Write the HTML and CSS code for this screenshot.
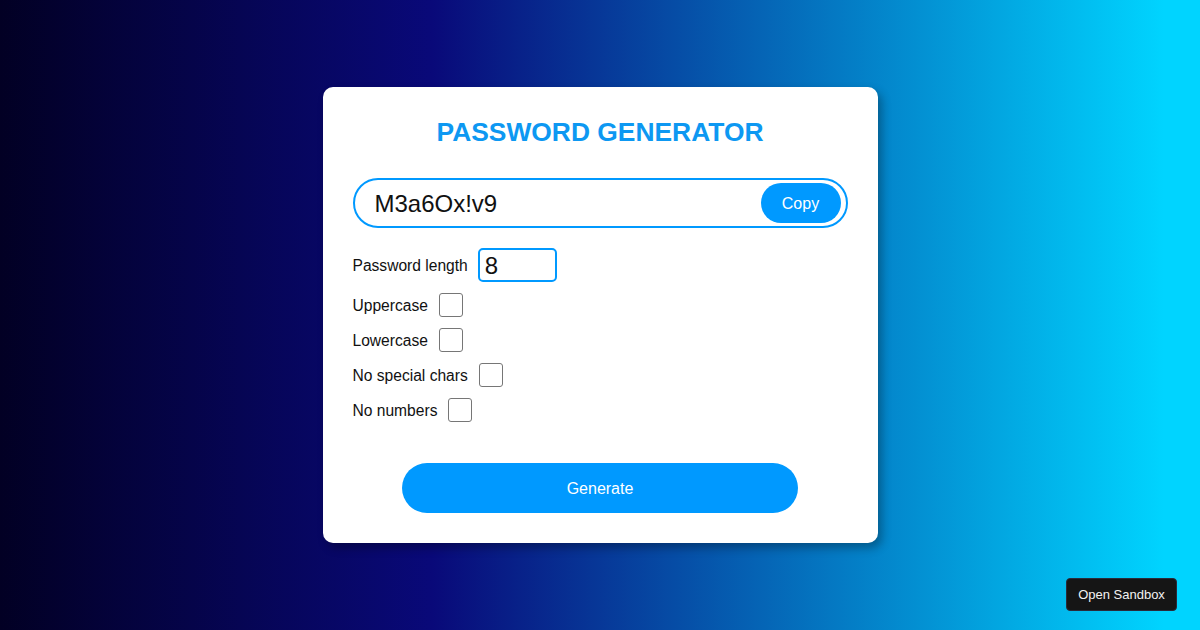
FILE: index.html
```html
<!DOCTYPE html>
<html lang="en">
<head>
<meta charset="utf-8">
<title>Password Generator</title>
<link rel="stylesheet" href="styles.css">
</head>
<body>
<main class="card">
  <h1 class="title">PASSWORD GENERATOR</h1>
  <div class="result">
    <span class="result-text">M3a6Ox!v9</span>
    <button class="copy-btn" type="button">Copy</button>
  </div>
  <div class="options">
    <label class="option"><span class="option-label">Password length</span><input class="length-input" type="number" value="8"></label>
    <label class="option"><span class="option-label">Uppercase</span><input class="check" type="checkbox"></label>
    <label class="option"><span class="option-label">Lowercase</span><input class="check" type="checkbox"></label>
    <label class="option"><span class="option-label">No special chars</span><input class="check" type="checkbox"></label>
    <label class="option"><span class="option-label">No numbers</span><input class="check" type="checkbox"></label>
  </div>
  <button class="generate-btn" type="button">Generate</button>
</main>
<a class="sandbox-btn" href="#">Open Sandbox</a>
</body>
</html>
```
FILE: styles.css
```css
* { box-sizing: border-box; }
html, body { margin: 0; padding: 0; }
body {
  width: 1200px;
  height: 630px;
  display: flex;
  align-items: center;
  justify-content: center;
  font-family: "Liberation Sans", Arial, sans-serif;
  background: linear-gradient(90deg, #020024 0%, #090979 36%, #00d4ff 97%);
  position: relative;
  overflow: hidden;
}
.card {
  width: 555px;
  height: 456px;
  background: #fff;
  border-radius: 10px;
  padding: 30px;
  box-shadow: 4px 5px 10px rgba(0, 0, 0, 0.3);
  display: flex;
  flex-direction: column;
}
.title {
  margin: 0;
  font-size: 26.4px;
  line-height: 30px;
  font-weight: bold;
  color: #0d98f2;
  text-align: center;
}
.result {
  margin-top: 31px;
  height: 50px;
  border: 2px solid #0099ff;
  border-radius: 25px;
  display: flex;
  align-items: center;
  justify-content: space-between;
  padding: 0 5px 0 20px;
}
.result-text {
  font-size: 24px;
  color: #111;
  padding-top: 1px;
}
.copy-btn {
  width: 80px;
  height: 40px;
  border: none;
  border-radius: 20px;
  background: #0099ff;
  color: #fff;
  font-family: inherit;
  font-size: 16px;
  padding: 2px 0 0;
}
.options {
  margin-top: 20px;
  display: flex;
  flex-direction: column;
  gap: 11px;
}
.option {
  display: flex;
  align-items: center;
  gap: 11px;
  font-size: 15.6px;
  color: #111;
}
.option-label {
  padding-top: 2px;
}
.length-input {
  width: 79px;
  height: 34px;
  border: 2px solid #0099ff;
  border-radius: 5px;
  font-family: inherit;
  font-size: 24px;
  padding: 2px 5px 0;
  color: #111;
  margin: 0 0 0 -1px;
}
.check {
  appearance: none;
  -webkit-appearance: none;
  width: 24px;
  height: 24px;
  margin: 0;
  border: 1px solid #767676;
  border-radius: 3px;
  background: #fff;
}
.generate-btn {
  margin: 41px auto 0;
  width: 80%;
  height: 50px;
  border: none;
  border-radius: 25px;
  background: #0099ff;
  color: #fff;
  font-family: inherit;
  font-size: 16px;
  padding: 2px 0 0;
}
.sandbox-btn {
  position: absolute;
  right: 23px;
  bottom: 19px;
  width: 111px;
  height: 33px;
  display: flex;
  align-items: center;
  justify-content: center;
  background: #151515;
  border: 1px solid #2a2a3a;
  border-radius: 4px;
  color: #f2f2f2;
  font-size: 13px;
  text-decoration: none;
}
```
